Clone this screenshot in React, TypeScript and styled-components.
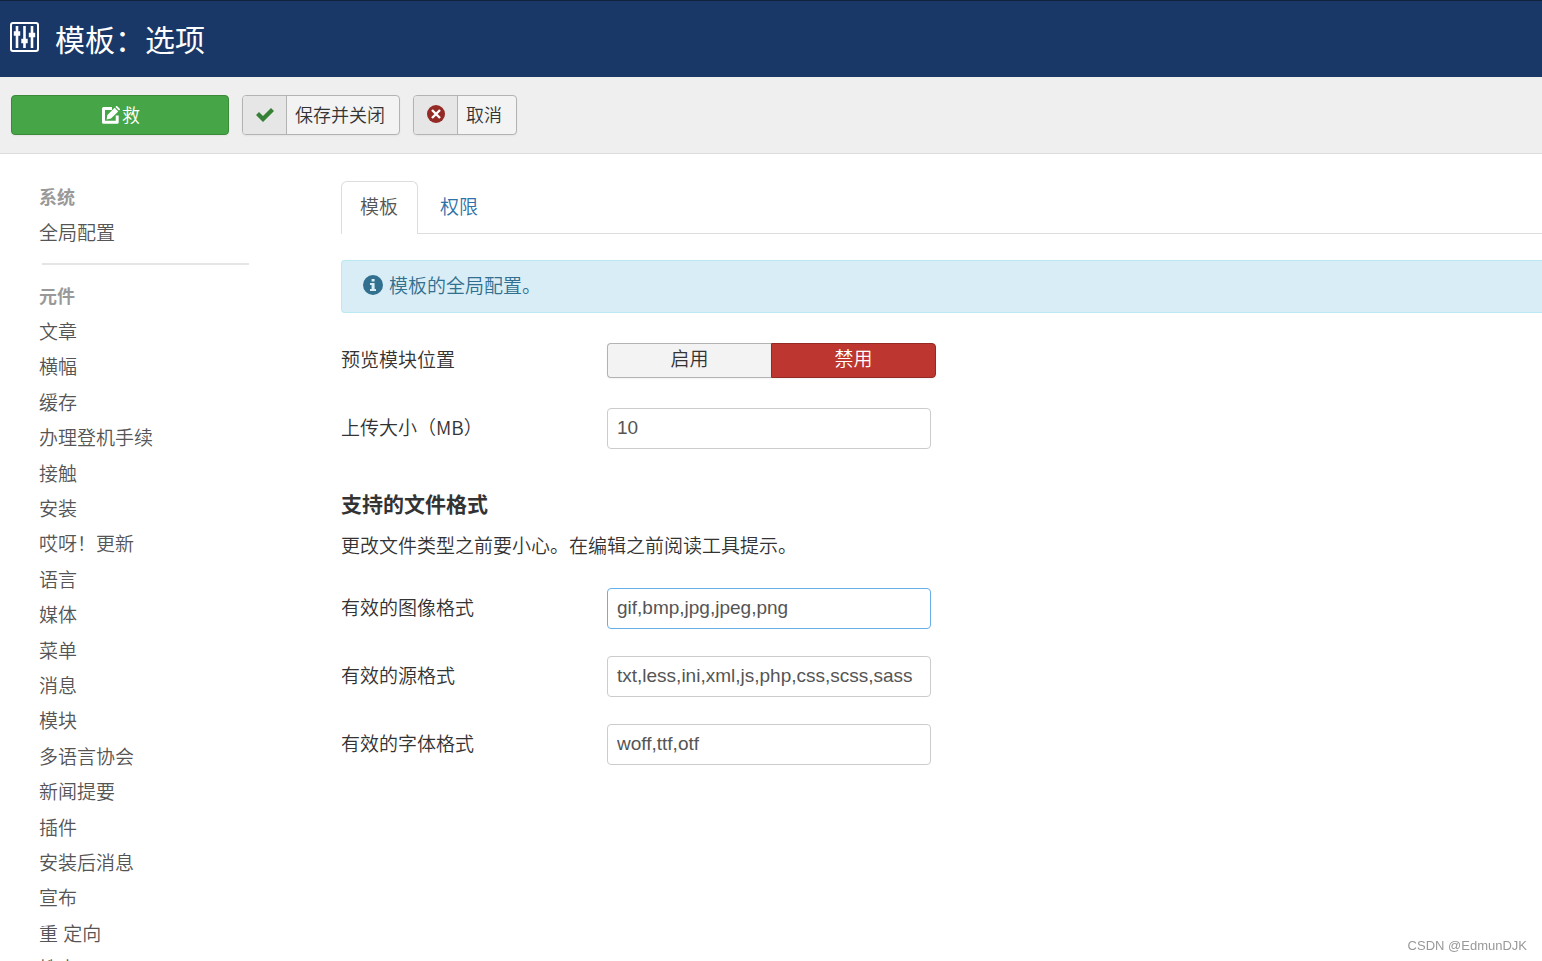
import React from 'react';
import styled, { createGlobalStyle } from 'styled-components';

const GlobalStyle = createGlobalStyle`
  *, *::before, *::after { box-sizing: border-box; }
  html, body { margin: 0; padding: 0; background: #fff; }
  body {
    font-family: "Liberation Sans", "Noto Sans CJK SC", sans-serif;
    font-size: 19px;
    font-weight: 350;
    line-height: 27px;
    color: #333;
  }
  button, input { font: inherit; }
`;

const Page = styled.div`
  height: 100vh;
  display: flex;
  flex-direction: column;
  overflow: hidden;
`;

const Header = styled.header`
  display: flex;
  align-items: center;
  gap: 15px;
  flex: none;
  height: 77px;
  padding: 0 10px;
  border-top: 1px solid #10223e;
  background: #1a3867;
  color: #fff;

  svg { margin-bottom: 3px; }
`;

const Title = styled.h1`
  margin: 0;
  padding-top: 4px;
  font-size: 30px;
  line-height: 40px;
  font-weight: 400;
`;

const Toolbar = styled.div`
  display: flex;
  gap: 13px;
  flex: none;
  padding: 18px 11px;
  border-bottom: 1px solid #ddd;
  background: #efefef;
`;

const ToolButton = styled.button<{ $primary?: boolean }>`
  display: flex;
  align-items: stretch;
  justify-content: center;
  height: 40px;
  width: ${(p) => (p.$primary ? '218px' : 'auto')};
  padding: 0;
  border: 1px solid ${(p) => (p.$primary ? '#3a8a3a' : '#b3b3b3')};
  border-radius: 4px;
  background: ${(p) => (p.$primary ? '#46a546' : '#f3f3f3')};
  color: ${(p) => (p.$primary ? '#fff' : '#333')};
  box-shadow: 0 1px 2px rgba(0, 0, 0, 0.05);
  font-size: 18px;
  line-height: 38px;
  overflow: hidden;
`;

const ToolIcon = styled.span<{ $boxed?: boolean }>`
  display: flex;
  align-items: center;
  justify-content: center;
  width: ${(p) => (p.$boxed ? '44px' : '22px')};
  border-right: ${(p) => (p.$boxed ? '1px solid #b3b3b3' : '0')};
  background: ${(p) => (p.$boxed ? '#e6e6e6' : 'transparent')};
`;

const ToolLabel = styled.span<{ $padded?: boolean }>`
  padding: ${(p) => (p.$padded ? '1px 14px 0 8px' : '1px 0 0')};
`;

const Body = styled.div`
  display: flex;
  align-items: flex-start;
`;

const Sidebar = styled.nav`
  flex: none;
  width: 341px;
  padding: 31px 92px 0 39px;
`;

const NavHeading = styled.h2`
  margin: 0;
  font-size: 18px;
  line-height: 27px;
  font-weight: 700;
  color: #999;
`;

const NavList = styled.ul`
  margin: 0;
  padding: 4px 0 0;
  list-style: none;
`;

const NavItem = styled.li`
  line-height: 35px;
  &:nth-child(5n + 2), &:nth-child(5n + 4) { line-height: 36px; }
`;

const NavLink = styled.a`
  color: #555;
  text-decoration: none;
`;

const Divider = styled.hr`
  margin: 12px 0 19px 3px;
  border: 0;
  border-top: 2px solid #e5e5e5;
`;

const Main = styled.main`
  flex: 1;
  min-width: 0;
  padding-top: 27px;
`;

const Tabs = styled.div`
  display: flex;
  height: 53px;
  gap: 3px;
  border-bottom: 1px solid #ddd;
`;

const Tab = styled.button<{ $active?: boolean }>`
  height: 53px;
  padding: 0 19px 2px 18px;
  border: 1px solid ${(p) => (p.$active ? '#ddd' : 'transparent')};
  border-bottom: 0;
  border-radius: 6px 6px 0 0;
  background: ${(p) => (p.$active ? '#fff' : 'transparent')};
  color: ${(p) => (p.$active ? '#555' : '#3071a9')};
`;

const Notice = styled.div`
  display: flex;
  align-items: center;
  gap: 6px;
  height: 53px;
  margin: 26px 0 30px;
  padding: 0 21px;
  border: 1px solid #bce8f1;
  border-right: 0;
  border-radius: 4px 0 0 4px;
  background: #d9edf7;
  color: #31708f;

  svg { margin-bottom: 4px; }
`;

const Form = styled.form`
  display: flex;
  flex-direction: column;
`;

const Field = styled.div`
  display: flex;
  align-items: flex-start;
  margin-bottom: 27px;
`;

const FieldLabel = styled.label<{ $compact?: boolean }>`
  flex: none;
  width: 266px;
  padding-top: ${(p) => (p.$compact ? '2px' : '5px')};
  font-family: "Noto Sans CJK SC", sans-serif;
`;

const TextInput = styled.input<{ $active?: boolean }>`
  width: 324px;
  height: 41px;
  padding: 0 9px 2px;
  border: 1px solid ${(p) => (p.$active ? '#66afe9' : '#ccc')};
  border-radius: 4px;
  background: #fff;
  color: #555;
  outline: 0;
`;

const Switch = styled.div`
  display: flex;
  width: 329px;
  height: 35px;
  margin-bottom: 3px;
`;

const SwitchButton = styled.button<{ $on?: boolean }>`
  flex: 1;
  padding: 0 0 2px;
  border: 1px solid ${(p) => (p.$on ? '#942a25' : '#b3b3b3')};
  border-right-width: ${(p) => (p.$on ? '1px' : '0')};
  border-radius: ${(p) => (p.$on ? '0 4px 4px 0' : '4px 0 0 4px')};
  background: ${(p) => (p.$on ? '#bd362f' : '#f3f3f3')};
  color: ${(p) => (p.$on ? '#fff' : '#333')};
  box-shadow: 0 1px 2px rgba(0, 0, 0, 0.05);
`;

const SectionTitle = styled.h2`
  margin: 14px 0 0;
  font-size: 21px;
  line-height: 30px;
  font-weight: 700;
`;

const SectionText = styled.p`
  margin: 13px 0 28px;
`;

const Watermark = styled.div`
  position: fixed;
  right: 15px;
  bottom: 5px;
  font-size: 13px;
  line-height: 20px;
  color: #999;
`;

const EqualizerIcon = () => (
  <svg width="30" height="31" viewBox="0 0 30 31" fill="none" stroke="#fff" strokeWidth="2" aria-hidden="true">
    <rect x="1" y="1" width="27" height="28" rx="2" />
    <path d="M7 4v22M14.5 4v22M22 4v22" strokeWidth="2.6" />
    <path d="M3.8 11.5h6.4M11.3 19h6.4M18.8 13h6.4" strokeWidth="4.6" />
  </svg>
);

const EditIcon = () => (
  <svg width="18" height="18" viewBox="0 0 18 18" fill="none" aria-hidden="true">
    <path d="M10 2.5H1.5v13.7h13.7V9.5" stroke="#fff" strokeWidth="3" strokeLinejoin="round" />
    <path d="M4.6 13.4l.8-4.4L12.6 1.8l3.6 3.6L9 12.6z" fill="#fff" />
    <path d="M13.4 1L14.4 0H15l3 3v.6l-1 1z" fill="#fff" />
  </svg>
);

const CheckIcon = () => (
  <svg width="18" height="14" viewBox="0 0 18 14" aria-hidden="true">
    <path d="M0 7l3-3 4 4 8-8 3 3L7 14z" fill="#378137" />
  </svg>
);

const CancelIcon = () => (
  <svg width="18" height="20" viewBox="0 0 18 20" aria-hidden="true">
    <circle cx="9" cy="9" r="9" fill="#942a25" />
    <path d="M5 5l8 8M13 5l-8 8" stroke="#fff" strokeWidth="2.4" />
  </svg>
);

const InfoIcon = () => (
  <svg width="20" height="20" viewBox="0 0 20 20" aria-hidden="true">
    <circle cx="10" cy="10" r="10" fill="#31708f" />
    <path d="M8.6 4h3v2.6h-3zM7 8h4.6v6H13v2H7v-2h1.6v-4H7z" fill="#d9edf7" />
  </svg>
);

const components = [
  '文章', '横幅', '缓存', '办理登机手续', '接触', '安装', '哎呀！更新', '语言', '媒体', '菜单',
  '消息', '模块', '多语言协会', '新闻提要', '插件', '安装后消息', '宣布', '重 定向', '搜索',
];

const formats = [
  { id: 'image', label: '有效的图像格式', value: 'gif,bmp,jpg,jpeg,png', active: true },
  { id: 'source', label: '有效的源格式', value: 'txt,less,ini,xml,js,php,css,scss,sass' },
  { id: 'font', label: '有效的字体格式', value: 'woff,ttf,otf' },
];

export default function App() {
  return (
    <Page lang="zh-CN">
      <GlobalStyle />
      <Header>
        <EqualizerIcon />
        <Title>模板：选项</Title>
      </Header>
      <Toolbar>
        <ToolButton $primary>
          <ToolIcon><EditIcon /></ToolIcon>
          <ToolLabel>救</ToolLabel>
        </ToolButton>
        <ToolButton>
          <ToolIcon $boxed><CheckIcon /></ToolIcon>
          <ToolLabel $padded>保存并关闭</ToolLabel>
        </ToolButton>
        <ToolButton>
          <ToolIcon $boxed><CancelIcon /></ToolIcon>
          <ToolLabel $padded>取消</ToolLabel>
        </ToolButton>
      </Toolbar>
      <Body>
        <Sidebar>
          <NavHeading>系统</NavHeading>
          <NavList>
            <NavItem><NavLink href="#config">全局配置</NavLink></NavItem>
          </NavList>
          <Divider />
          <NavHeading>元件</NavHeading>
          <NavList>
            {components.map((name) => (
              <NavItem key={name}><NavLink href="#component">{name}</NavLink></NavItem>
            ))}
          </NavList>
        </Sidebar>
        <Main>
          <Tabs role="tablist">
            <Tab role="tab" aria-selected="true" $active>模板</Tab>
            <Tab role="tab" aria-selected="false">权限</Tab>
          </Tabs>
          <Notice><InfoIcon />模板的全局配置。</Notice>
          <Form>
            <Field>
              <FieldLabel as="span" id="preview" $compact>预览模块位置</FieldLabel>
              <Switch role="group" aria-labelledby="preview">
                <SwitchButton type="button">启用</SwitchButton>
                <SwitchButton type="button" $on>禁用</SwitchButton>
              </Switch>
            </Field>
            <Field>
              <FieldLabel htmlFor="upload">上传大小（MB）</FieldLabel>
              <TextInput id="upload" defaultValue="10" />
            </Field>
            <SectionTitle>支持的文件格式</SectionTitle>
            <SectionText>更改文件类型之前要小心。在编辑之前阅读工具提示。</SectionText>
            {formats.map((f) => (
              <Field key={f.id}>
                <FieldLabel htmlFor={f.id}>{f.label}</FieldLabel>
                <TextInput id={f.id} defaultValue={f.value} $active={f.active} />
              </Field>
            ))}
          </Form>
        </Main>
      </Body>
      <Watermark>CSDN @EdmunDJK</Watermark>
    </Page>
  );
}
